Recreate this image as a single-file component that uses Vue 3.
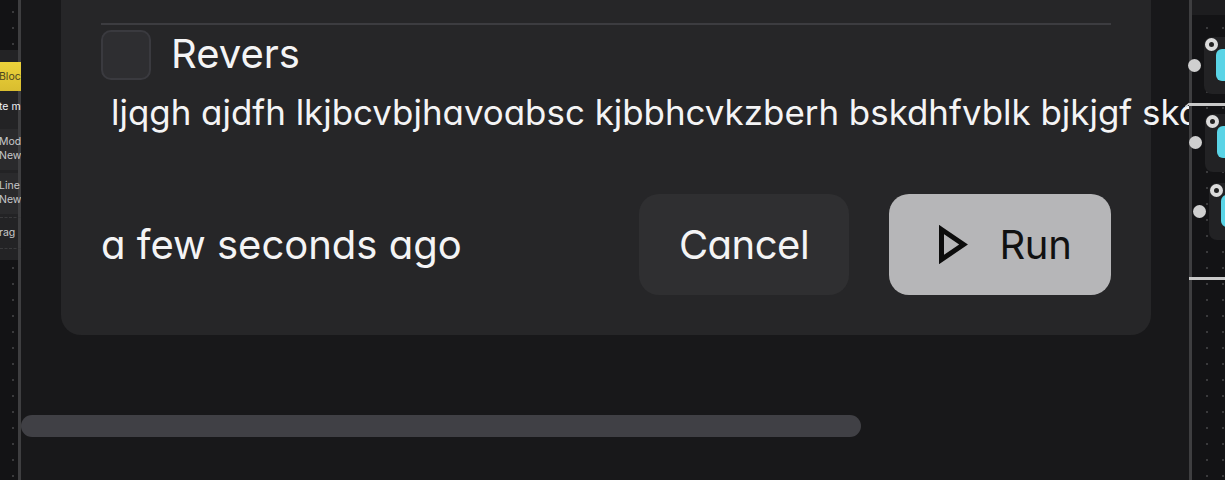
<script setup>
const leftItems = [
  { lines: ['Mod', 'New'] },
  { lines: ['Line', 'New'] },
]
</script>

<template>
  <div class="stage">
    <aside class="side side-left">
      <div class="nodes-left">
        <div class="bloc">Bloc</div>
        <div class="plain">te m</div>
        <div v-for="item in leftItems" :key="item.lines[0]" class="two">
          <span v-for="l in item.lines" :key="l">{{ l }}</span>
        </div>
        <div class="drag">rag</div>
      </div>
    </aside>
    <main class="center">
      <section class="modal">
        <div class="rule"></div>
        <label class="check-row">
          <span class="box"></span>
          <span class="check-label">Revers</span>
        </label>
        <div class="prompt">ljqgh ajdfh lkjbcvbjhavoabsc kjbbhcvkzberh bskdhfvblk bjkjgf skdjfbvkjb</div>
        <div class="footer">
          <span class="when">a few seconds ago</span>
          <div class="actions">
            <button class="btn cancel">Cancel</button>
            <button class="btn run">
              <svg class="play" width="29" height="39" viewBox="0 0 29 39" fill="none">
                <path d="M2.5 4.5 L24.5 19.5 L2.5 34.5 Z" stroke="#0c0c0c" stroke-width="5" />
              </svg>
              <span>Run</span>
            </button>
          </div>
        </div>
      </section>
      <div class="scrollbar"></div>
      <svg class="wire-end" width="6" height="6" viewBox="0 0 6 6">
        <path d="M0 5 L5 1" stroke="#d5d5d5" stroke-width="1.5" />
      </svg>
      <i class="arrow"></i>
    </main>
    <aside class="side side-right">
      <div class="top-band"></div>
      <div class="flow-node n1"><i class="ring"></i><b class="chip"></b></div>
      <div class="flow-node n2"><i class="ring"></i><b class="chip"></b></div>
      <div class="flow-node n3"><i class="ring"></i><b class="chip"></b></div>
      <i class="dot d1"></i><i class="dot d2"></i><i class="dot d3"></i>
      <i class="wire w1"></i><i class="wire w2"></i>
    </aside>
  </div>
</template>

<style>
html, body { margin: 0; background: #18181a; }
</style>

<style scoped>
.stage {
  width: 1225px;
  height: 480px;
  display: flex;
  overflow: hidden;
  background: #18181a;
  font-family: Inter, "Liberation Sans", sans-serif;
  font-feature-settings: "cv11";
  color: #f4f4f5;
}
.side {
  position: relative;
  background-color: #131315;
  background-image: radial-gradient(circle, #3a3a3c 0.8px, transparent 1.1px);
  background-size: 16px 16px;
}
.side-left {
  width: 21px;
  flex: none;
  box-sizing: border-box;
  border-right: 3px solid #3e3e40;
  background-position: 5px 4px;
}
.side-right { flex: 1; background-position: 7px 4px; }
.top-band { height: 15px; background: #1d1d1f; }
.nodes-left {
  width: 21px;
  margin-top: 50px;
  background: linear-gradient(to right, #232325 18px, transparent 18px);
  height: 210px;
  padding-top: 12px;
  box-sizing: border-box;
  font-size: 10.5px;
  text-indent: -1px;
  font-feature-settings: normal;
  overflow: hidden;
  position: relative;
}
.bloc { background: linear-gradient(#ecd23b, #d9bd2f); color: #4a4420; height: 29px; line-height: 29px; white-space: nowrap; }
.plain { height: 38px; line-height: 32px; white-space: nowrap; }
.two {
  background: linear-gradient(to right, #2a2a2c 18px, transparent 18px);
  height: 41px; margin-bottom: 3px; padding-top: 6px; box-sizing: border-box;
  display: flex; flex-direction: column; line-height: 14px; color: #c8c8ca; white-space: nowrap;
}
.drag { line-height: 30px; color: #c8c8ca; border-block: 1px dashed #3a3a3c; margin-top: 1px; }
.center {
  width: 1171px;
  flex: none;
  box-sizing: border-box;
  border-right: 3px solid #3e3e40;
  background: #18181a;
  overflow: hidden;
  position: relative;
}
.modal {
  box-sizing: border-box;
  width: 1090px;
  height: 335px;
  margin-left: 40px;
  padding: 23px 40px 0;
  background: #262628;
  border-radius: 0 0 20px 20px;
}
.rule { height: 2px; background: #3c3c40; }
.check-row { display: flex; align-items: center; gap: 20px; margin-top: 5px; height: 50px; }
.box {
  width: 50px; height: 50px; box-sizing: border-box;
  border: 2px solid #3a3a3f; border-radius: 10px; background: #2e2e31;
}
.check-label { font-size: 40px; line-height: 48px; padding-bottom: 2px; }
.prompt { font-size: 34.9px; margin: 6px 0 0 10px; white-space: nowrap; line-height: 52px; }
.footer { display: flex; justify-content: space-between; align-items: center; margin-top: 56px; }
.when { font-size: 40px; }
.actions { display: flex; gap: 40px; }
.btn {
  height: 101px; border: none; border-radius: 20px;
  font: inherit; font-size: 40px; display: flex; align-items: center; justify-content: center;
}
.cancel { width: 210px; background: #2f2f31; color: #f4f4f5; letter-spacing: -0.5px; }
.run { width: 222px; background: #b6b6b8; color: #111; gap: 31px; padding: 0 0 0 11px; letter-spacing: -0.3px; }
.scrollbar {
  position: absolute;
  left: 0; top: 415px;
  width: 840px; height: 22px;
  border-radius: 11px;
  background: #404045;
}
.wire-end { position: absolute; left: 1164px; top: 102px; }
.arrow {
  position: absolute; left: 1168px; top: 208px;
  border-left: 3px solid #b5b5b5;
  border-block: 3px solid transparent;
}
.flow-node { position: absolute; width: 60px; background: #222224; border-radius: 8px; }
.n1 { left: 12px; top: 37px; height: 57px; }
.n2 { left: 13px; top: 114px; height: 58px; }
.n3 { left: 17px; top: 183px; height: 57px; }
.ring { position: absolute; left: 1px; top: 1px; width: 5px; height: 5px; border: 4px solid #dcdcdc; border-radius: 50%; background: #222; }
.chip { position: absolute; left: 12px; top: 12px; width: 30px; height: 32px; border-radius: 6px; background: #5ad4e6; }
.dot { position: absolute; width: 13px; height: 13px; border-radius: 50%; background: #cfcfcf; }
.d1 { left: -4px; top: 59px; }
.d2 { left: -3px; top: 136px; }
.d3 { left: 1px; top: 205px; }
.wire { position: absolute; left: -3px; width: 40px; height: 3px; background: #c9c9c9; }
.w1 { top: 103px; }
.w2 { top: 277px; }
</style>
